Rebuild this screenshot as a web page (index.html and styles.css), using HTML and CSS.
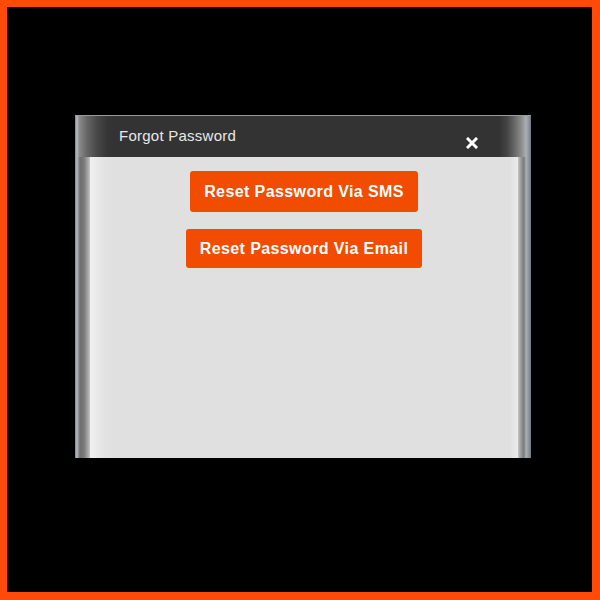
FILE: index.html
```html
<!DOCTYPE html>
<html>
<head>
<meta charset="utf-8">
<link rel="stylesheet" href="styles.css">
</head>
<body>
<div class="page">
  <div class="dialog">
    <div class="titlebar">
      <span class="title">Forgot Password</span>
      <svg class="close" width="12" height="12" viewBox="0 0 12 12"><path d="M2 2 L10 10 M10 2 L2 10" stroke="#ffffff" stroke-width="3" stroke-linecap="square"/></svg>
    </div>
    <div class="content">
      <button class="btn btn-sms">Reset Password Via SMS</button>
      <button class="btn btn-email">Reset Password Via Email</button>
    </div>
  </div>
</div>
</body>
</html>
```
FILE: styles.css
```css
html, body {
  margin: 0;
  padding: 0;
  background: #000;
}
.page {
  width: 600px;
  height: 600px;
  box-sizing: border-box;
  border-style: solid;
  border-color: #ff4a0a;
  border-width: 7px 8px 8px 7px;
  background: #000;
  padding: 108px 0 0 68px;
}
.dialog {
  width: 456px;
  height: 343px;
  display: flex;
  flex-direction: column;
  background: linear-gradient(to right,
    #7d848c 0px, #b9bec4 2px, #9a9da1 3px, #6e6e6e 5px, #7a7a7a 9px, #a8a8a8 13px, #c4c4c4 15px,
    #c4c4c4 calc(100% - 13px), #8c8c8c calc(100% - 9px), #7a7a7a calc(100% - 7px), #aab0b6 calc(100% - 5px), #8b929a calc(100% - 2px), #6f767e 100%);
}
.titlebar {
  height: 42px;
  box-sizing: border-box;
  display: flex;
  align-items: center;
  justify-content: space-between;
  padding: 0 53px 0 44px;
  border-top: 1px solid #9a9a9a;
  background: linear-gradient(to right,
    #7d848c 0px, #b9bec4 2px, #8c8c8c 4px, #666 12px, #484848 22px, #363636 32px, #333 40px,
    #333 calc(100% - 32px), #444 calc(100% - 24px), #6a6a6a calc(100% - 16px), #909090 calc(100% - 9px), #aab0b6 calc(100% - 5px), #8b929a calc(100% - 2px), #6f767e 100%);
}
.title {
  font-family: "Liberation Sans", Arial, sans-serif;
  font-size: 15px;
  letter-spacing: 0.25px;
  color: #e8e8e8;
  margin-top: -2px;
}
.close {
  display: block;
  margin-top: 12px;
}
.content {
  flex: 1;
  margin: 0 13px 0 15px;
  background: linear-gradient(to right, #f0f0f0 0px, #e3e3e3 14px, #e0e0e0 24px, #e0e0e0 calc(100% - 8px), #ececec 100%);
  display: flex;
  flex-direction: column;
  align-items: center;
  padding-top: 14px;
  gap: 17px;
}
.btn {
  font-family: "Liberation Sans", Arial, sans-serif;
  font-weight: bold;
  font-size: 16px;
  letter-spacing: 0.4px;
  color: #fff;
  background: #f24c00;
  border: none;
  border-radius: 3px;
  height: 41px;
  padding: 0 14px;
  margin: 0;
  cursor: pointer;
}
.btn-email {
  height: 39px;
}
```
